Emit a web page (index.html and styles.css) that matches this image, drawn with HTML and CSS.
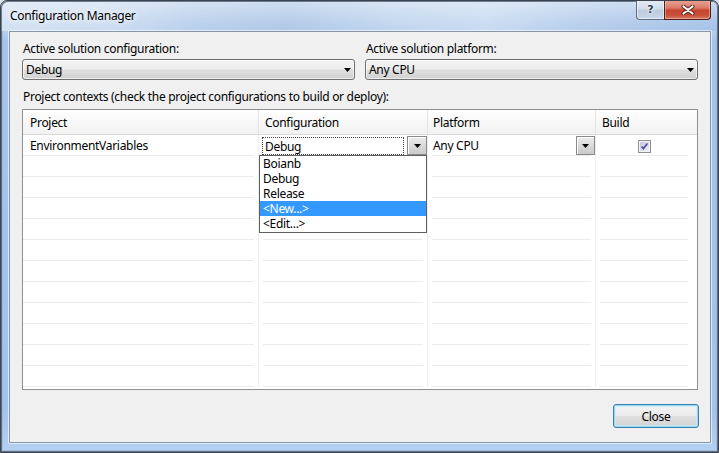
FILE: index.html
```
<!DOCTYPE html>
<html>
<head>
<meta charset="utf-8">
<title>Configuration Manager</title>
<link rel="stylesheet" href="styles.css">
</head>
<body>
<div class="window">
  <div class="titlebar">
    <span class="title">Configuration Manager</span>
    <div class="caption-buttons">
      <div class="cap-btn help"><span>?</span></div>
      <div class="cap-btn close">
        <svg width="14" height="10" viewBox="0 0 14 10">
          <path d="M2.5 1.5 L11.5 8.5 M11.5 1.5 L2.5 8.5" stroke="#5b1f18" stroke-width="4" stroke-linecap="round"/>
          <path d="M2.5 1.5 L11.5 8.5 M11.5 1.5 L2.5 8.5" stroke="#ffffff" stroke-width="2.2" stroke-linecap="round"/>
        </svg>
      </div>
    </div>
  </div>
  <div class="client">
    <div class="top-selects">
      <div class="field">
        <div class="lbl">Active solution configuration:</div>
        <div class="combo">
          <span>Debug</span>
          <svg class="arrow" width="7" height="4" viewBox="0 0 7 4"><polygon points="0,0 7,0 3.5,4" fill="#000"/></svg>
        </div>
      </div>
      <div class="field">
        <div class="lbl">Active solution platform:</div>
        <div class="combo">
          <span>Any CPU</span>
          <svg class="arrow" width="7" height="4" viewBox="0 0 7 4"><polygon points="0,0 7,0 3.5,4" fill="#000"/></svg>
        </div>
      </div>
    </div>
    <div class="lbl contexts">Project contexts (check the project configurations to build or deploy):</div>
    <div class="grid">
      <div class="row head">
        <div class="cell first">Project</div>
        <div class="cell">Configuration</div>
        <div class="cell plat">Platform</div>
        <div class="cell last">Build</div>
      </div>
      <div class="row">
        <div class="cell first">EnvironmentVariables</div>
        <div class="cell combo-cell">
          <div class="edit">Debug</div>
          <div class="ddbtn"><svg width="7" height="4" viewBox="0 0 7 4"><polygon points="0,0 7,0 3.5,4" fill="#000"/></svg></div>
          <div class="droplist">
            <div class="item">Boianb</div>
            <div class="item">Debug</div>
            <div class="item">Release</div>
            <div class="item selected">&lt;New...&gt;</div>
            <div class="item">&lt;Edit...&gt;</div>
          </div>
        </div>
        <div class="cell plat plat-cell">
          <span class="grow">Any CPU</span>
          <div class="ddbtn"><svg width="7" height="4" viewBox="0 0 7 4"><polygon points="0,0 7,0 3.5,4" fill="#000"/></svg></div>
        </div>
        <div class="cell last check-cell">
          <svg class="checkbox" width="13" height="13" viewBox="0 0 13 13">
            <defs>
              <linearGradient id="cbg" x1="0" y1="0" x2="1" y2="1">
                <stop offset="0" stop-color="#c5c7dc"/>
                <stop offset="1" stop-color="#eceef6"/>
              </linearGradient>
            </defs>
            <rect x="0.5" y="0.5" width="12" height="12" fill="#f4f4f4" stroke="#8f8f9a"/>
            <rect x="2" y="2" width="9" height="9" fill="url(#cbg)"/>
            <path d="M3.6 6.4 L5.4 8.6 L9.4 3.4" stroke="#50509a" stroke-width="1.6" fill="none"/>
          </svg>
        </div>
      </div>
      <div class="row"><div class="cell first"></div><div class="cell"></div><div class="cell plat"></div><div class="cell last"></div></div>
      <div class="row"><div class="cell first"></div><div class="cell"></div><div class="cell plat"></div><div class="cell last"></div></div>
      <div class="row"><div class="cell first"></div><div class="cell"></div><div class="cell plat"></div><div class="cell last"></div></div>
      <div class="row"><div class="cell first"></div><div class="cell"></div><div class="cell plat"></div><div class="cell last"></div></div>
      <div class="row"><div class="cell first"></div><div class="cell"></div><div class="cell plat"></div><div class="cell last"></div></div>
      <div class="row"><div class="cell first"></div><div class="cell"></div><div class="cell plat"></div><div class="cell last"></div></div>
      <div class="row"><div class="cell first"></div><div class="cell"></div><div class="cell plat"></div><div class="cell last"></div></div>
      <div class="row"><div class="cell first"></div><div class="cell"></div><div class="cell plat"></div><div class="cell last"></div></div>
      <div class="row"><div class="cell first"></div><div class="cell"></div><div class="cell plat"></div><div class="cell last"></div></div>
      <div class="row"><div class="cell first"></div><div class="cell"></div><div class="cell plat"></div><div class="cell last"></div></div>
      <div class="row"><div class="cell first"></div><div class="cell"></div><div class="cell plat"></div><div class="cell last"></div></div>
    </div>
    <div class="footer">
      <button class="btn">Close</button>
    </div>
  </div>
</div>
</body>
</html>
```
FILE: styles.css
```
* { box-sizing: border-box; }
html, body { margin: 0; padding: 0; }
body {
  width: 719px;
  height: 453px;
  overflow: hidden;
  background: #dde3ea;
  font-family: "Noto Sans", "Open Sans", sans-serif;
  font-size: 12px;
  line-height: 15px;
  letter-spacing: -0.3px;
  color: #000;
}

.window {
  width: 719px;
  height: 453px;
  display: flex;
  flex-direction: column;
  border: 1px solid #3a4450;
  border-radius: 7px 7px 0 0;
  background: linear-gradient(180deg, #c6d9f0 0px, #b9d0ec 30px, #a4c4ee 40px, #a2c3ee 90%, #b4d0f1 100%);
  box-shadow: inset 0 0 0 1px rgba(80,95,115,0.8), inset 0 0 0 2px rgba(150,170,195,0.5);
  overflow: hidden;
}

.titlebar {
  height: 30px;
  flex: none;
  display: flex;
  align-items: flex-start;
  padding: 7px 7px 0 9px;
  background:
    linear-gradient(180deg, rgba(255,255,255,0.4) 0%, rgba(255,255,255,0.05) 75%, rgba(255,255,255,0) 100%),
    linear-gradient(90deg, #d3e2f3 0%, #cbdcf1 15%, #b8cfeb 28%, #b0c9e8 40%, #c1d6ee 55%, #c8dbf1 68%, #b5cdeb 82%, #a5c2e8 100%);
  border-radius: 6px 6px 0 0;
  box-shadow: inset 1px 1px 0 rgba(80,95,115,0.8), inset -1px 0 0 rgba(80,95,115,0.8);
}

.title {
  font-size: 12px;
  line-height: 15px;
  text-shadow: 0 0 6px rgba(255,255,255,0.95), 0 0 10px rgba(255,255,255,0.9);
}

.caption-buttons {
  margin-left: auto;
  margin-top: -8px;
  display: flex;
}

.cap-btn {
  height: 20px;
  display: flex;
  align-items: center;
  justify-content: center;
}

.cap-btn.help {
  width: 28px;
  border: 1px solid #5d6e84;
  border-top: none;
  border-right: none;
  border-radius: 0 0 0 4px;
  background: linear-gradient(180deg, #e3eaf3 0%, #d3deeb 45%, #bccbde 55%, #c9d7e8 100%);
  box-shadow: inset 0 0 0 1px rgba(255,255,255,0.5);
}

.cap-btn.help span {
  font-family: "DejaVu Sans", sans-serif;
  font-weight: bold;
  font-size: 11px;
  color: #2a3e56;
  letter-spacing: 0;
  text-shadow: 0 0 3px #fff, 0 0 2px #fff;
}

.cap-btn.close {
  width: 47px;
  border: 1px solid #4f1f1a;
  border-top: none;
  border-radius: 0 0 4px 0;
  background: linear-gradient(180deg, #e7a497 0%, #dc7d6c 40%, #c8442f 55%, #c9503b 80%, #d97a64 100%);
  box-shadow: inset 0 0 0 1px rgba(255,210,200,0.45);
}

.client {
  flex: 1;
  margin: 0 7px 9px 8px;
  border: 1px solid #8696aa;
  box-shadow: 0 0 0 1px rgba(255,255,255,0.6);
  background: #f0f0f0;
  padding: 9px 12px 0 12px;
  display: flex;
  flex-direction: column;
}

.top-selects {
  display: grid;
  grid-template-columns: 1fr 1fr;
  column-gap: 10px;
}

.lbl {
  padding-left: 1px;
  line-height: 15px;
}

.combo {
  margin-top: 3px;
  height: 21px;
  border: 1px solid #707070;
  border-radius: 3px;
  background: linear-gradient(180deg, #f3f3f3 0%, #ececec 48%, #dedede 52%, #d1d1d1 100%);
  box-shadow: inset 0 0 0 1px rgba(255,255,255,0.6);
  display: flex;
  align-items: center;
  padding: 0 3px 0 3px;
}

.combo span { flex: 1; }
.combo .arrow { flex: none; margin-top: 1px; }

.contexts {
  margin-top: 9px;
}

.grid {
  margin-top: 5px;
  height: 281px;
  border: 1px solid #8c8f94;
  background: #fff;
  overflow: hidden;
}

.row {
  display: grid;
  grid-template-columns: 236px 169px 168px 101px;
  height: 21px;
}

.cell {
  display: flex;
  align-items: center;
  padding-left: 6px;
  border-right: 1px solid #eeeeee;
  background: linear-gradient(#ebebeb, #ebebeb) no-repeat center bottom / calc(100% - 8px) 1px;
  white-space: nowrap;
}

.cell.first {
  padding-left: 7px;
  background-position: right 4px bottom;
  background-size: calc(100% - 4px) 1px;
}

.cell.plat { padding-left: 5px; }

.cell.last {
  border-right: none;
  background-position: left 4px bottom;
  background-size: calc(100% - 13px) 1px;
}

.row.head {
  height: 25px;
  background: linear-gradient(180deg, #ffffff 0%, #fafafa 30%, #f2f2f2 100%);
  border-bottom: 1px solid #dadada;
}

.row.head .cell {
  background: none;
  border-right: 1px solid #e6e6e6;
  padding-top: 1px;
}
.row.head .cell.last { border-right: none; }

.combo-cell {
  position: relative;
  align-items: flex-start;
  padding: 1px 0 0 3px;
  gap: 3px;
}

.edit {
  width: 142px;
  height: 18px;
  margin-top: 1px;
  border: 1px dotted #444;
  padding-left: 2px;
  line-height: 15px;
  display: flex;
  align-items: center;
}

.ddbtn {
  flex: none;
  width: 20px;
  height: 19px;
  border: 1px solid #8a8a8a;
  background: linear-gradient(180deg, #ececec 0%, #dadada 50%, #cacaca 100%);
  box-shadow: inset 1px 1px 0 #ffffff;
  display: flex;
  align-items: center;
  justify-content: center;
}

.plat-cell { padding-right: 0; }
.plat-cell .grow { flex: 1; }
.plat-cell .ddbtn { width: 19px; align-self: flex-start; margin-top: 1px; }

.check-cell {
  justify-content: center;
  padding-left: 0;
  padding-right: 4px;
}
.checkbox { margin-top: 1px; }

.droplist {
  position: absolute;
  left: 0;
  top: 20px;
  width: 168px;
  border: 1px solid #5f5f5f;
  background: #fff;
  z-index: 5;
  padding-bottom: 1px;
}

.item {
  height: 15px;
  line-height: 15px;
  padding-left: 3px;
}

.item.selected {
  background: #3399ff;
  color: #fff;
}

.footer {
  margin-top: 14px;
  display: flex;
  justify-content: flex-end;
}

.btn {
  width: 86px;
  height: 24px;
  margin-right: -1px;
  border: 1px solid #3c7fb1;
  border-radius: 3px;
  background: linear-gradient(180deg, #f4f4f4 0%, #ececec 48%, #dfdfdf 52%, #d3d3d3 100%);
  box-shadow: inset 0 0 0 1px #98d8f3, inset 0 0 0 2px rgba(200,236,250,0.7);
  font-family: "Noto Sans", "Open Sans", sans-serif;
  font-size: 12px;
  letter-spacing: -0.3px;
  color: #000;
  padding: 0;
  line-height: 15px;
}
```
